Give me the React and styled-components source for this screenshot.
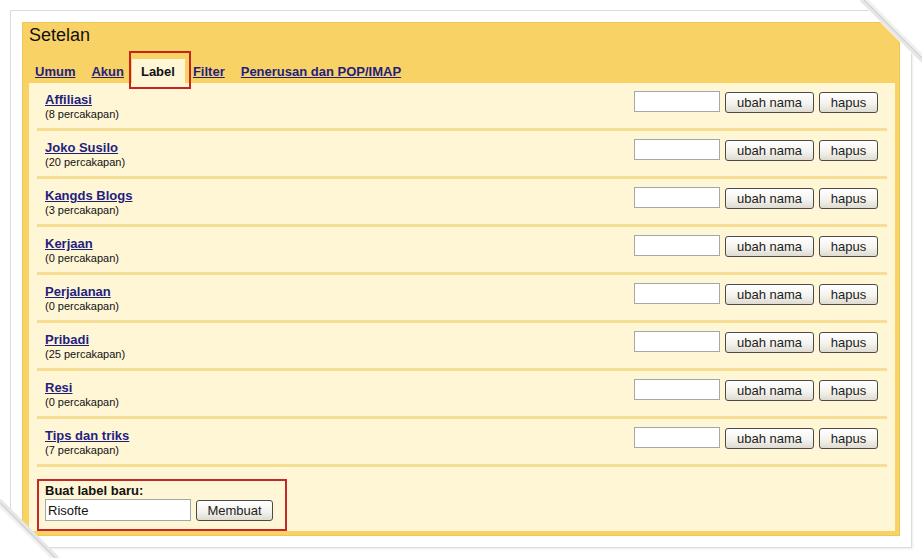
import React from "react";
import styled, { createGlobalStyle } from "styled-components";

const GlobalStyle = createGlobalStyle`
  html, body { margin: 0; padding: 0; background: #ffffff; }
  body { font-family: "Liberation Sans", Arial, sans-serif; }
  * { box-sizing: border-box; }
`;

const Page = styled.div`
  position: relative;
  width: 922px;
  height: 558px;
  padding: 10px;
  overflow: hidden;
  background: #fff;
`;

const Frame = styled.div`
  height: 538px;
  border: 1px solid #dcdcdc;
  padding: 11px;
  background: #fff;
  box-shadow: 1px 1px 2px rgba(0, 0, 0, 0.08);
`;

const Panel = styled.div`
  height: 514px;
  background: #f9d266;
  padding: 3px 5px 5px 7px;
  display: flex;
  flex-direction: column;
  box-shadow: inset 0 0 0 1px #efc65a;
`;

const Title = styled.div`
  font-size: 18px;
  line-height: 21px;
  color: #111;
`;

const Tabs = styled.div`
  display: flex;
  align-items: flex-end;
  margin: 13px 0 0 -2px;
  height: 24px;
`;

const Tab = styled.a`
  position: relative;
  display: block;
  padding: ${(p) => (p.$active ? "1px 10px 0 9px" : "1px 8px 0")};
  height: 24px;
  line-height: 24px;
  font-size: 13px;
  font-weight: bold;
  color: ${(p) => (p.$active ? "#111" : "#1f1f7e")};
  text-decoration: ${(p) => (p.$active ? "none" : "underline")};
  background: ${(p) => (p.$active ? "#fff6d6" : "transparent")};
  cursor: pointer;
  &::after {
    content: "";
    display: ${(p) => (p.$active ? "block" : "none")};
    position: absolute;
    top: -8px;
    left: -3px;
    right: -6px;
    bottom: -6px;
    border: 2px solid #c8241f;
  }
`;

const Content = styled.div`
  flex: 1;
  background: #fff6d6;
  padding: 0 8px;
`;

const Row = styled.div`
  display: flex;
  justify-content: space-between;
  align-items: flex-start;
  height: 48px;
  padding: 7px 9px 0 8px;
  border-bottom: 3px solid #f5dd92;
`;

const LabelInfo = styled.div`
  display: flex;
  flex-direction: column;
  padding-top: 2px;
`;

const LabelLink = styled.a`
  font-size: 13px;
  line-height: 16px;
  font-weight: bold;
  color: #1f1f7e;
  text-decoration: underline;
  cursor: pointer;
`;

const Count = styled.span`
  font-size: 11px;
  line-height: 13px;
  color: #111;
`;

const Controls = styled.div`
  display: flex;
  align-items: flex-start;
  gap: ${(p) => p.$gap || 5}px;
  margin-top: ${(p) => p.$top || 0}px;
`;

const TextInput = styled.input`
  width: ${(p) => p.$w}px;
  height: ${(p) => p.$h || 21}px;
  border: 1px solid #a3a8ad;
  background: #fff;
  font-family: "Liberation Sans", Arial, sans-serif;
  font-size: 13px;
  padding: 0 2px;
  margin: 0;
  color: #111;
  outline: none;
`;

const Button = styled.button`
  width: ${(p) => p.$w}px;
  height: 21px;
  margin: 1px 0 0 0;
  padding: 0;
  border: 1px solid #4a4a4a;
  border-radius: 3px;
  background: linear-gradient(#ffffff 0%, #f4f3ee 55%, #dedbd0 100%);
  font-family: "Liberation Sans", Arial, sans-serif;
  font-size: 13px;
  color: #222;
  line-height: 19px;
  cursor: pointer;
`;

const CreateBox = styled.div`
  width: 250px;
  height: 52px;
  margin: 12px 0 0 0;
  border: 2px solid #c3282a;
  padding: 2px 6px 7px 6px;
`;

const CreateLabel = styled.div`
  font-size: 13px;
  line-height: 15px;
  font-weight: bold;
  color: #111;
`;

const Fold = styled.svg`
  position: absolute;
  left: ${(p) => p.$x}px;
  top: ${(p) => p.$y}px;
  pointer-events: none;
`;

const labels = [
  ["Affiliasi", 8],
  ["Joko Susilo", 20],
  ["Kangds Blogs", 3],
  ["Kerjaan", 0],
  ["Perjalanan", 0],
  ["Pribadi", 25],
  ["Resi", 0],
  ["Tips dan triks", 7],
];

const tabs = ["Umum", "Akun", "Label", "Filter", "Penerusan dan POP/IMAP"];

export default function App() {
  return (
    <>
      <GlobalStyle />
      <Page>
        <Frame>
          <Panel>
            <Title>Setelan</Title>
            <Tabs>
              {tabs.map((t) => (
                <Tab key={t} $active={t === "Label"}>
                  {t}
                </Tab>
              ))}
            </Tabs>
            <Content>
              {labels.map(([name, n]) => (
                <Row key={name}>
                  <LabelInfo>
                    <LabelLink>{name}</LabelLink>
                    <Count>({n} percakapan)</Count>
                  </LabelInfo>
                  <Controls $top={1}>
                    <TextInput $w={86} />
                    <Button $w={89}>ubah nama</Button>
                    <Button $w={59}>hapus</Button>
                  </Controls>
                </Row>
              ))}
              <CreateBox>
                <CreateLabel>Buat label baru:</CreateLabel>
                <Controls $top={1}>
                  <TextInput $w={146} $h={22} defaultValue="Risofte" />
                  <Button $w={77}>Membuat</Button>
                </Controls>
              </CreateBox>
            </Content>
          </Panel>
        </Frame>
        <Fold $x={852} $y={0} width="70" height="72" viewBox="0 0 70 72">
          <polygon points="6,0 70,0 70,64" fill="#ffffff" />
          <line x1="9" y1="0" x2="70" y2="61" stroke="#e6e6e6" strokeWidth="3" />
          <line x1="12" y1="0" x2="70" y2="58" stroke="#cfcfcf" strokeWidth="1.5" />
          <line x1="15" y1="0" x2="70" y2="55" stroke="#efefef" strokeWidth="2" />
        </Fold>
        <Fold $x={0} $y={488} width="70" height="70" viewBox="0 0 70 70">
          <polygon points="0,14 0,70 56,70" fill="#ffffff" />
          <line x1="0" y1="12" x2="58" y2="70" stroke="#e6e6e6" strokeWidth="3" />
          <line x1="0" y1="15" x2="55" y2="70" stroke="#cfcfcf" strokeWidth="1.5" />
          <line x1="0" y1="18" x2="52" y2="70" stroke="#efefef" strokeWidth="2" />
        </Fold>
      </Page>
    </>
  );
}
